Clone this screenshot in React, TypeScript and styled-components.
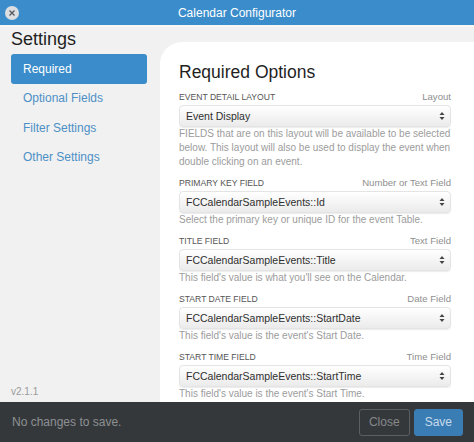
import styled, { createGlobalStyle } from 'styled-components'

const GlobalStyle = createGlobalStyle`
  html, body {
    margin: 0;
    padding: 0;
  }
  body {
    font-family: 'Liberation Sans', Arial, sans-serif;
    background: #f1f1f1;
  }
`

const BLUE = '#3a8cca'

const Window = styled.div`
  width: 474px;
  height: 442px;
  display: flex;
  flex-direction: column;
  overflow: hidden;
  background: #f1f1f1;
`

const TitleBar = styled.div`
  height: 25px;
  flex: none;
  display: grid;
  grid-template-columns: 25px 1fr 25px;
  align-items: center;
  background: ${BLUE};
  border-bottom: 2px solid #f7f7f7;
`

const CloseDot = styled.span`
  width: 14px;
  height: 14px;
  margin-left: 5px;
  border-radius: 50%;
  background: #dcdfe2;
  display: flex;
  align-items: center;
  justify-content: center;
`

const Title = styled.div`
  text-align: center;
  color: #fff;
  font-size: 12px;
`

const Body = styled.div`
  flex: 1;
  min-height: 0;
  display: flex;
`

const Sidebar = styled.nav`
  width: 160px;
  flex: none;
  display: flex;
  flex-direction: column;
  padding: 1px 13px 3px 11px;
  box-sizing: border-box;
`

const SideHeading = styled.h2`
  margin: 0 0 4px;
  font-size: 18px;
  line-height: 22px;
  font-weight: 400;
  color: #1f1f1f;
`

const NavItem = styled.div<{ $active?: boolean }>`
  height: 29.5px;
  display: flex;
  align-items: center;
  padding-left: 12px;
  border-radius: 3px;
  font-size: 12px;
  color: ${p => (p.$active ? '#fff' : '#4d90c6')};
  background: ${p => (p.$active ? BLUE : 'transparent')};
`

const Version = styled.div`
  margin-top: auto;
  font-size: 10px;
  line-height: 14px;
  color: #9a9a9a;
`

const Panel = styled.main`
  flex: 1;
  margin-top: 15px;
  background: #fff;
  border-top-left-radius: 22px;
  padding: 20px 23px 0 19px;
  overflow: hidden;
`

const PanelHeading = styled.h1`
  margin: 0 0 9px;
  font-size: 17.5px;
  line-height: 20px;
  font-weight: 400;
  color: #1f1f1f;
`

const Field = styled.div`
  margin-bottom: 8px;
`

const LabelRow = styled.div`
  display: flex;
  justify-content: space-between;
  align-items: baseline;
  height: 12px;
  line-height: 12px;
  margin-bottom: 2px;
`

const Label = styled.span`
  font-size: 8.6px;
  color: #555;
  text-transform: uppercase;
`

const Kind = styled.span`
  font-size: 9.6px;
  color: #8f8f8f;
`

const Select = styled.div`
  height: 22px;
  box-sizing: border-box;
  display: flex;
  align-items: center;
  justify-content: space-between;
  padding: 0 5px 0 6px;
  border-radius: 4px;
  border: 1px solid #e4e4e4;
  background: linear-gradient(#ffffff, #ebebeb);
  box-shadow: 0 1px 1px rgba(0, 0, 0, 0.08);
  font-size: 10.5px;
  color: #2f2f2f;
`

const Help = styled.p`
  margin: 0;
  font-size: 10px;
  line-height: 14px;
  color: #9c9c9c;
`

const Footer = styled.footer`
  height: 40px;
  flex: none;
  display: flex;
  align-items: center;
  justify-content: space-between;
  padding: 0 11px 0 12px;
  background: #35383b;
`

const Status = styled.span`
  font-size: 12px;
  color: #8d9093;
`

const Buttons = styled.div`
  display: flex;
  gap: 4px;
`

const Button = styled.button<{ $primary?: boolean }>`
  height: 27px;
  padding: 0 ${p => (p.$primary ? '10px' : '9px')};
  border-radius: 3px;
  font-family: inherit;
  font-size: 12px;
  border: 1px solid ${p => (p.$primary ? '#3a7db4' : '#5c5f62')};
  background: ${p => (p.$primary ? '#3a7db4' : 'transparent')};
  color: ${p => (p.$primary ? '#c9dbea' : '#85888b')};
`

function Arrows() {
  return (
    <svg width="6" height="10" viewBox="0 0 6 10">
      <path d="M3 1 L5.5 4 H0.5 Z" fill="#444" />
      <path d="M3 9 L5.5 6 H0.5 Z" fill="#444" />
    </svg>
  )
}

const fields = [
  {
    label: 'Event Detail Layout',
    kind: 'Layout',
    value: 'Event Display',
    help: 'FIELDS that are on this layout will be available to be selected below. This layout will also be used to display the event when double clicking on an event.',
  },
  {
    label: 'Primary Key Field',
    kind: 'Number or Text Field',
    value: 'FCCalendarSampleEvents::Id',
    help: 'Select the primary key or unique ID for the event Table.',
  },
  {
    label: 'Title Field',
    kind: 'Text Field',
    value: 'FCCalendarSampleEvents::Title',
    help: "This field's value is what you'll see on the Calendar.",
  },
  {
    label: 'Start Date Field',
    kind: 'Date Field',
    value: 'FCCalendarSampleEvents::StartDate',
    help: "This field's value is the event's Start Date.",
  },
  {
    label: 'Start Time Field',
    kind: 'Time Field',
    value: 'FCCalendarSampleEvents::StartTime',
    help: "This field's value is the event's Start Time.",
  },
]

const navItems = ['Required', 'Optional Fields', 'Filter Settings', 'Other Settings']

export default function App() {
  return (
    <>
      <GlobalStyle />
      <Window>
        <TitleBar>
          <CloseDot>
            <svg width="6" height="6" viewBox="0 0 6 6">
              <path d="M0.5 0.5 L5.5 5.5 M5.5 0.5 L0.5 5.5" stroke="#55595d" strokeWidth="1.3" />
            </svg>
          </CloseDot>
          <Title>Calendar Configurator</Title>
          <span />
        </TitleBar>

        <Body>
          <Sidebar>
            <SideHeading>Settings</SideHeading>
            {navItems.map((item, i) => (
              <NavItem key={item} $active={i === 0}>
                {item}
              </NavItem>
            ))}
            <Version>v2.1.1</Version>
          </Sidebar>

          <Panel>
            <PanelHeading>Required Options</PanelHeading>
            {fields.map(f => (
              <Field key={f.label}>
                <LabelRow>
                  <Label>{f.label}</Label>
                  <Kind>{f.kind}</Kind>
                </LabelRow>
                <Select>
                  {f.value}
                  <Arrows />
                </Select>
                <Help>{f.help}</Help>
              </Field>
            ))}
          </Panel>
        </Body>

        <Footer>
          <Status>No changes to save.</Status>
          <Buttons>
            <Button>Close</Button>
            <Button $primary>Save</Button>
          </Buttons>
        </Footer>
      </Window>
    </>
  )
}
